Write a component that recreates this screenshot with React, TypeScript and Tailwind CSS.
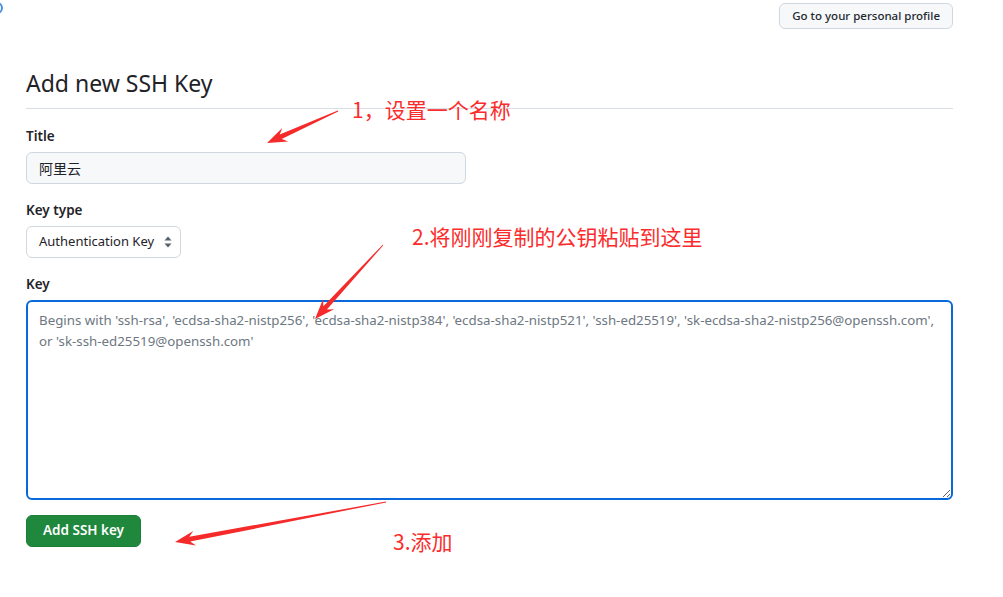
import React from 'react';

type Pt = [number, number];

// tapered annotation arrow, thin at the tail and a triangle at the tip
function arrowPoints(tail: Pt, tip: Pt) {
  const [x1, y1] = tail;
  const [x2, y2] = tip;
  const len = Math.hypot(x2 - x1, y2 - y1);
  const dx = (x2 - x1) / len;
  const dy = (y2 - y1) / len;
  const nx = -dy;
  const ny = dx;
  const H = 20;
  const W = 7.5;
  const neck: Pt = [x2 - dx * (H - 5), y2 - dy * (H - 5)];
  const wing: Pt = [x2 - dx * H, y2 - dy * H];
  const pts: Pt[] = [
    [x1 + nx * 0.4, y1 + ny * 0.4],
    [neck[0] + nx * 2.4, neck[1] + ny * 2.4],
    [wing[0] + nx * W, wing[1] + ny * W],
    [x2, y2],
    [wing[0] - nx * W, wing[1] - ny * W],
    [neck[0] - nx * 2.4, neck[1] - ny * 2.4],
    [x1 - nx * 0.4, y1 - ny * 0.4],
  ];
  return pts.map((p) => p.map((v) => v.toFixed(1)).join(',')).join(' ');
}

const arrows: { tail: Pt; tip: Pt }[] = [
  { tail: [338, 111], tip: [267, 143] },
  { tail: [383, 245], tip: [315, 319] },
  { tail: [386, 502], tip: [175, 542] },
];

const placeholder =
  "Begins with 'ssh-rsa', 'ecdsa-sha2-nistp256', 'ecdsa-sha2-nistp384', 'ecdsa-sha2-nistp521', 'ssh-ed25519', 'sk-ecdsa-sha2-nistp256@openssh.com',\nor 'sk-ssh-ed25519@openssh.com'";

export default function App() {
  return (
    <div className="relative w-[1003px] h-[597px] overflow-hidden bg-white font-['Noto_Sans','Noto_Sans_CJK_SC',sans-serif] text-[#1f2328]">
      {/* clipped avatar edge top-left */}
      <div className="absolute left-[-9px] top-[2px] w-[12px] h-[12px] rounded-full border-2 border-[#4a90e2]" />

      <div className="ml-[26px] w-[927px]">
        {/* top action */}
        <div className="flex justify-end pt-[3px]">
          <button className="h-[26px] px-[12px] rounded-md border border-[#d0d7de] bg-[#f6f8fa] text-[11.5px] leading-none font-medium text-[#24292f] whitespace-nowrap">
            Go to your personal profile
          </button>
        </div>

        {/* heading */}
        <div className="mt-[39px] pb-[10px] border-b border-[#d8dee4]">
          <h1 className="text-[23px] leading-[30px] font-normal">Add new SSH Key</h1>
        </div>

        {/* title */}
        <label className="block mt-[17px] text-[13.5px] leading-[20px] font-semibold">Title</label>
        <div className="mt-[6px] w-[440px] h-[32px] px-[12px] flex items-center rounded-md border border-[#d0d7de] bg-[#f6f8fa] text-[14px]">
          阿里云
        </div>

        {/* key type */}
        <label className="block mt-[16px] text-[13.5px] leading-[20px] font-semibold">Key type</label>
        <div className="mt-[6px] w-[155px] h-[32px] pl-[12px] pr-[7px] flex items-center justify-between rounded-md border border-[#d0d7de] bg-white text-[13px] whitespace-nowrap">
          <span>Authentication Key</span>
          <svg width="10" height="14" viewBox="0 0 10 14" className="text-[#57606a]">
            <path d="M5 1.5 L8.5 5.5 H1.5 Z M5 12.5 L1.5 8.5 H8.5 Z" fill="currentColor" />
          </svg>
        </div>

        {/* key */}
        <label className="block mt-[16px] text-[13.5px] leading-[20px] font-semibold">Key</label>
        <textarea
          className="block mt-[6px] w-[927px] h-[200px] px-[11px] py-[8px] rounded-md border-2 border-[#0969da] bg-white text-[13.3px] leading-[21px] outline-none placeholder:text-[#6e7781]"
          placeholder={placeholder}
        />

        <button className="mt-[15px] h-[32px] px-[16px] rounded-md bg-[#1f883d] border border-[#1a7f37] text-white text-[13.5px] font-semibold leading-none">
          Add SSH key
        </button>
      </div>

      {/* annotations */}
      <svg className="absolute inset-0 pointer-events-none" width="1003" height="597">
        {arrows.map((a, i) => (
          <polygon key={i} points={arrowPoints(a.tail, a.tip)} fill="#f52a2a" />
        ))}
      </svg>
      <div className="absolute left-[352px] top-[95px] text-[21px] leading-[28px] text-[#fb2c2c] font-['Noto_Sans_CJK_SC',sans-serif]">
        1，设置一个名称
      </div>
      <div className="absolute left-[412px] top-[222px] text-[21px] leading-[28px] text-[#fb2c2c] font-['Noto_Sans_CJK_SC',sans-serif]">
        2.将刚刚复制的公钥粘贴到这里
      </div>
      <div className="absolute left-[393px] top-[527px] text-[21px] leading-[28px] text-[#fb2c2c] font-['Noto_Sans_CJK_SC',sans-serif]">
        3.添加
      </div>
    </div>
  );
}
